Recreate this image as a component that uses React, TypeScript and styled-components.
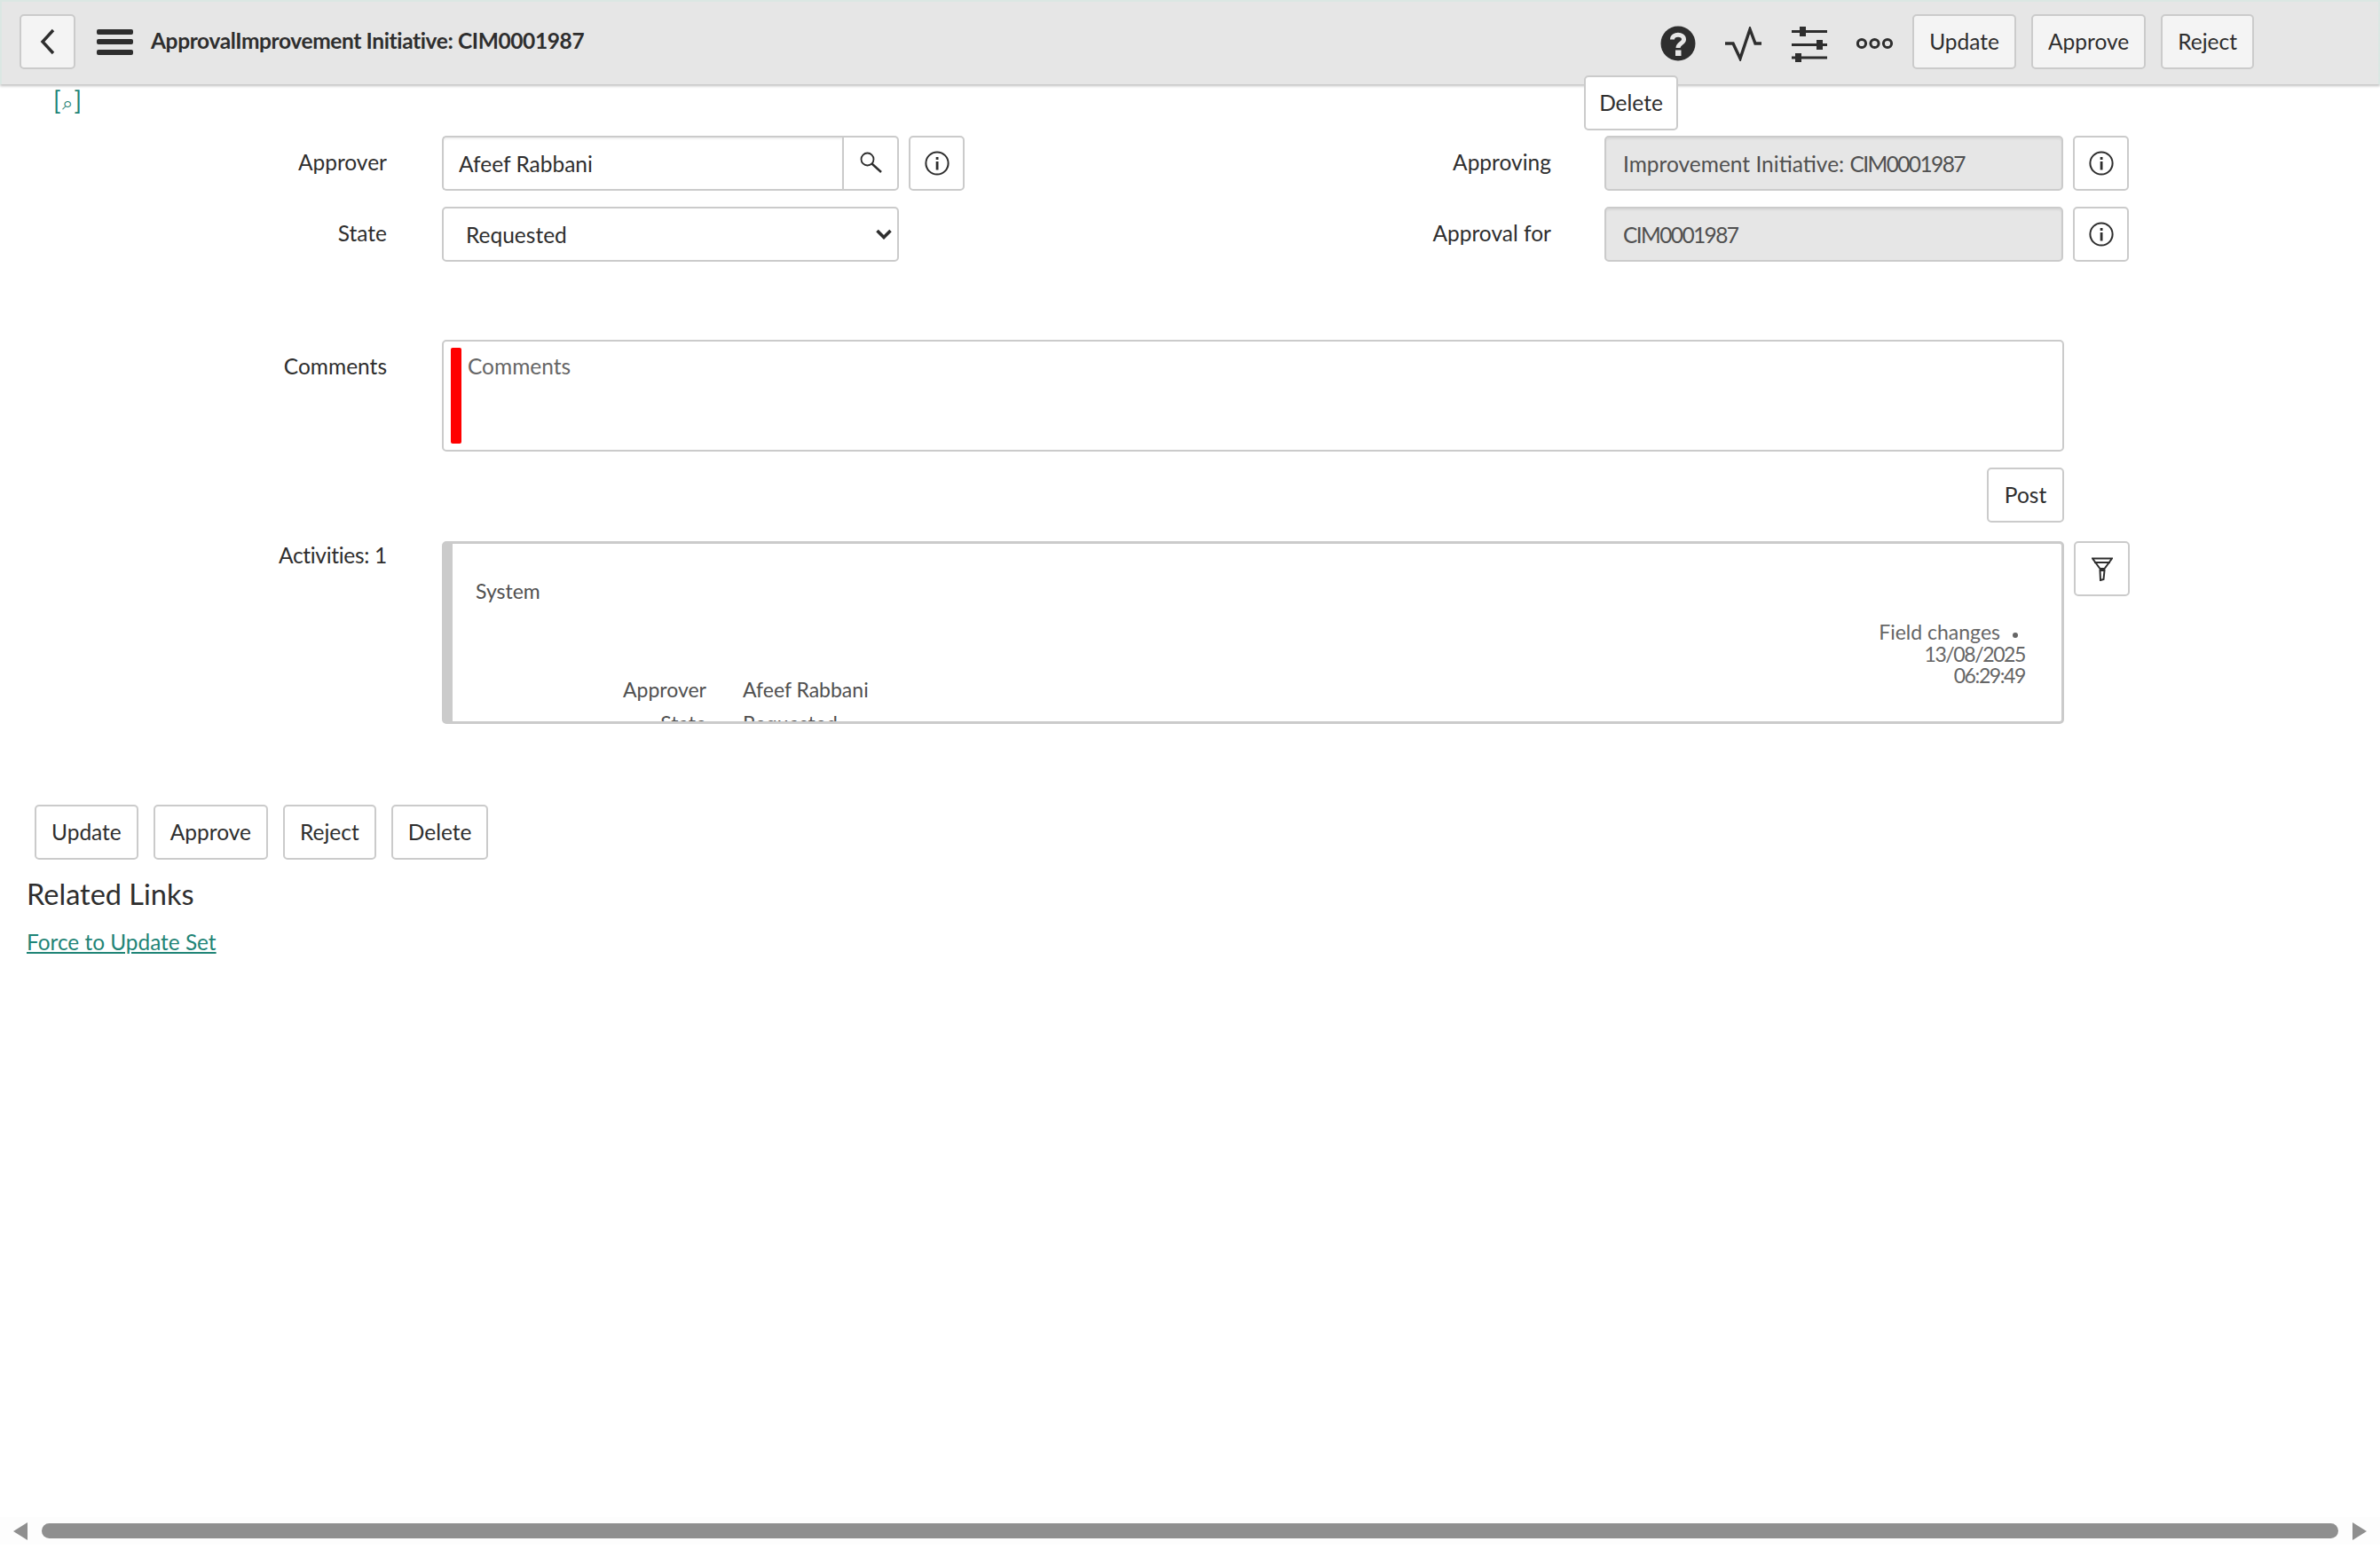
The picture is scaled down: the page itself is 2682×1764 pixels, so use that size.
import React from "react";
import styled, { createGlobalStyle } from "styled-components";

const GlobalStyle = createGlobalStyle`
  html, body {
    margin: 0;
    padding: 0;
    background: #ffffff;
  }
  * {
    box-sizing: border-box;
  }
`;

const FONT = `"Lato", "Noto Sans", sans-serif`;
const TEXT = "#2e2e2e";
const LINE = "#cbcbcb";

const App: React.FC = () => {
  return (
    <Page>
      <GlobalStyle />
      <Header>
        <BackButton aria-label="Back">
          <svg width="20" height="30" viewBox="0 0 20 30" fill="none">
            <path d="M16 2 L4 15 L16 28" stroke={TEXT} strokeWidth="3.4" />
          </svg>
        </BackButton>
        <Hamburger>
          <HamburgerBar />
          <HamburgerBar />
          <HamburgerBar />
        </Hamburger>
        <Title>ApprovalImprovement Initiative: CIM0001987</Title>
        <HeaderRight>
          <HeaderIcon>
            <svg width="40" height="40" viewBox="0 0 40 40">
              <circle cx="20" cy="20" r="19.5" fill={TEXT} />
              <path
                d="M13.5 15.5 C13.5 8.5 26.5 8.5 26.5 15.5 C26.5 20 20 19.5 20 25"
                fill="none"
                stroke="#e6e6e6"
                strokeWidth="5"
              />
              <rect x="17" y="27.5" width="6.5" height="6.5" fill="#e6e6e6" />
            </svg>
          </HeaderIcon>
          <HeaderIcon>
            <svg width="42" height="39" viewBox="0 0 42 39" fill="none">
              <polyline
                points="0,19 9,19 17,36 28,3 34,19 41,19"
                stroke={TEXT}
                strokeWidth="3.4"
              />
            </svg>
          </HeaderIcon>
          <HeaderIcon>
            <svg width="41" height="41" viewBox="0 0 41 41" fill={TEXT}>
              <rect x="0" y="5" width="40" height="3" />
              <rect x="0" y="20" width="40" height="3" />
              <rect x="0" y="34.5" width="40" height="3" />
              <rect x="9" y="1" width="7" height="11" />
              <rect x="28" y="16" width="7" height="11" />
              <rect x="4" y="31" width="7" height="10" />
            </svg>
          </HeaderIcon>
          <HeaderIcon>
            <svg width="42" height="16" viewBox="0 0 42 16" fill="none">
              <circle cx="6" cy="8" r="4.6" stroke={TEXT} strokeWidth="3" />
              <circle cx="20.5" cy="8" r="4.6" stroke={TEXT} strokeWidth="3" />
              <circle cx="35" cy="8" r="4.6" stroke={TEXT} strokeWidth="3" />
            </svg>
          </HeaderIcon>
          <HeaderButton>Update</HeaderButton>
          <HeaderButton>Approve</HeaderButton>
          <HeaderButton>Reject</HeaderButton>
        </HeaderRight>
        <DeleteMenu>Delete</DeleteMenu>
      </Header>

      <Reference>
        [<RefGlyph>⌕</RefGlyph>]
      </Reference>

      <FormGrid>
        <FieldRow>
          <Label>Approver</Label>
          <Control>
            <TextInput defaultValue="Afeef Rabbani" />
            <SearchButton aria-label="Search">
              <svg width="25" height="24" viewBox="0 0 25 24" fill="none">
                <circle cx="8.5" cy="8.5" r="7" stroke={TEXT} strokeWidth="1.8" />
                <path d="M13.5 13.5 L24 23" stroke={TEXT} strokeWidth="2.4" />
              </svg>
            </SearchButton>
            <InfoButton />
          </Control>
          <Label>Approving</Label>
          <Control>
            <ReadOnly>
              Improvement Initiative: <Code>CIM0001987</Code>
            </ReadOnly>
            <InfoButton />
          </Control>
        </FieldRow>
        <FieldRow>
          <Label>State</Label>
          <Control>
            <SelectWrap>
              <StateSelect defaultValue="Requested">
                <option>Requested</option>
                <option>Approved</option>
                <option>Rejected</option>
              </StateSelect>
              <SelectChevron width="18" height="12" viewBox="0 0 18 12" fill="none">
                <path d="M1.5 2 L9 9.5 L16.5 2" stroke={TEXT} strokeWidth="3.6" />
              </SelectChevron>
            </SelectWrap>
          </Control>
          <Label>Approval for</Label>
          <Control>
            <ReadOnly>
              <Code>CIM0001987</Code>
            </ReadOnly>
            <InfoButton />
          </Control>
        </FieldRow>
      </FormGrid>

      <CommentsRow>
        <Label>Comments</Label>
        <CommentsBox>
          <MandatoryBar />
          <CommentsInput placeholder="Comments" />
        </CommentsBox>
      </CommentsRow>

      <PostRow>
        <PostButton>Post</PostButton>
      </PostRow>

      <ActivitiesRow>
        <ActivitiesLabel>Activities: 1</ActivitiesLabel>
        <ActivityBox>
          <ActivityAuthor>System</ActivityAuthor>
          <ActivityMeta>
            <MetaLine>
              Field changes<MetaDot />
            </MetaLine>
            <MetaDate>13/08/2025</MetaDate>
            <MetaDate>06:29:49</MetaDate>
          </ActivityMeta>
          <ChangeRow>
            <ChangeName>Approver</ChangeName>
            <span>Afeef Rabbani</span>
          </ChangeRow>
          <ChangeRow>
            <ChangeName>State</ChangeName>
            <span>Requested</span>
          </ChangeRow>
        </ActivityBox>
        <FilterButton aria-label="Filter">
          <svg width="24" height="27" viewBox="0 0 24 27" fill="none">
            <path
              d="M1 1.5 H23 L14.5 13 H9.5 Z M3 6 H21"
              stroke={TEXT}
              strokeWidth="2"
            />
            <path d="M9.5 15 H14.5 L13.5 25 L10 26 Z" stroke={TEXT} strokeWidth="2" />
          </svg>
        </FilterButton>
      </ActivitiesRow>

      <BottomButtons>
        <PlainButton>Update</PlainButton>
        <PlainButton>Approve</PlainButton>
        <PlainButton>Reject</PlainButton>
        <PlainButton>Delete</PlainButton>
      </BottomButtons>

      <RelatedHeading>Related Links</RelatedHeading>
      <RelatedLink href="#">Force to Update Set</RelatedLink>

      <ScrollBar>
        <ScrollArrow $dir="left" />
        <ScrollThumb />
        <ScrollArrow $dir="right" />
      </ScrollBar>
    </Page>
  );
};

const InfoButton: React.FC = () => (
  <IconBox aria-label="Info">
    <svg width="28" height="28" viewBox="0 0 28 28" fill="none">
      <circle cx="14" cy="14" r="12.6" stroke={TEXT} strokeWidth="2" />
      <rect x="12.7" y="12" width="2.8" height="9.5" fill={TEXT} />
      <rect x="12.7" y="7" width="2.8" height="3" fill={TEXT} />
    </svg>
  </IconBox>
);

const Page = styled.div`
  position: relative;
  display: flex;
  flex-direction: column;
  width: 2682px;
  height: 1764px;
  overflow: hidden;
  font-family: ${FONT};
  font-size: 24.5px;
  color: ${TEXT};
`;

const Header = styled.header`
  position: relative;
  display: flex;
  align-items: center;
  flex: none;
  height: 95px;
  padding: 0 140px 3px 20px;
  background: #e6e6e6;
  border-top: 2px solid #dbe7e3;
  border-left: 2px solid #dbe7e3;
  border-right: 2px solid #dbe7e3;
  box-shadow: 0 2px 3px rgba(0, 0, 0, 0.25);
`;

const BackButton = styled.button`
  display: flex;
  align-items: center;
  justify-content: center;
  width: 63px;
  height: 62px;
  padding: 0;
  background: #f4f4f4;
  border: 2px solid ${LINE};
  border-radius: 5px;
`;

const Hamburger = styled.div`
  display: flex;
  flex-direction: column;
  gap: 5.5px;
  width: 41px;
  margin-left: 24px;
`;

const HamburgerBar = styled.span`
  height: 6px;
  background: ${TEXT};
  border-radius: 2px;
`;

const Title = styled.h1`
  margin: 0 0 4px 20px;
  font-size: 24.5px;
  font-weight: 700;
  letter-spacing: -0.38px;
  white-space: nowrap;
`;

const HeaderRight = styled.div`
  display: flex;
  align-items: center;
  gap: 17px;
  margin-left: auto;
`;

const HeaderIcon = styled.span`
  display: flex;
  align-items: center;
  justify-content: center;
  width: 42px;
  margin: 4px 15px 0 0;

  &:nth-child(4) {
    margin-right: 4px;
  }
`;

const ButtonBase = styled.button`
  height: 62px;
  padding: 0 17px 2px;
  font-family: inherit;
  font-size: 24.5px;
  color: ${TEXT};
  background: #ffffff;
  border: 2px solid ${LINE};
  border-radius: 5px;
  white-space: nowrap;
`;

const HeaderButton = styled(ButtonBase)`
  background: #f4f4f4;
`;

const PlainButton = styled(ButtonBase)``;

const PostButton = styled(ButtonBase)`
  width: 87px;
`;

const DeleteMenu = styled(ButtonBase)`
  position: absolute;
  top: 83px;
  right: 789px;
  width: 106px;
  padding: 0 0 2px;
  z-index: 2;
`;

const Reference = styled.div`
  flex: none;
  height: 58px;
  padding: 2px 0 0 60px;
  font-size: 28px;
  line-height: 32px;
  letter-spacing: 1.5px;
  color: #1f8476;
`;

const RefGlyph = styled.span`
  font-family: "DejaVu Sans", sans-serif;
  font-size: 22px;
`;

const FormGrid = styled.div`
  display: flex;
  flex-direction: column;
  gap: 18px;
`;

const FieldRow = styled.div`
  display: grid;
  grid-template-columns: 436px 651px 661px 651px;
  height: 62px;
`;

const Label = styled.label`
  padding-top: 14px;
  line-height: 32px;
  text-align: right;
  white-space: nowrap;
`;

const ActivitiesLabel = styled(Label)`
  padding-top: 0;
  letter-spacing: -0.3px;
`;

const Control = styled.div`
  display: flex;
  padding-left: 60px;

  &:nth-child(2) {
    padding-left: 62px;
  }
`;

const TextInput = styled.input`
  width: 451px;
  height: 62px;
  padding: 0 17px;
  font-family: inherit;
  font-size: 24.5px;
  color: ${TEXT};
  background: #ffffff;
  border: 2px solid ${LINE};
  border-right: none;
  border-radius: 5px 0 0 5px;
  box-shadow: inset 0 2px 2px rgba(0, 0, 0, 0.06);
`;

const SearchButton = styled.button`
  display: flex;
  align-items: center;
  justify-content: center;
  width: 64px;
  height: 62px;
  padding: 0 0 2px;
  background: #ffffff;
  border: 2px solid ${LINE};
  border-radius: 0 5px 5px 0;
`;

const IconBox = styled.button`
  display: flex;
  align-items: center;
  justify-content: center;
  flex: none;
  width: 63px;
  height: 62px;
  margin-left: 11px;
  padding: 0;
  background: #ffffff;
  border: 2px solid ${LINE};
  border-radius: 5px;
`;

const ReadOnly = styled.div`
  width: 518px;
  height: 62px;
  padding: 0 19px;
  line-height: 60px;
  color: #505050;
  background: #e6e6e6;
  border: 2px solid ${LINE};
  border-radius: 5px;
  box-shadow: inset 0 2px 2px rgba(0, 0, 0, 0.06);
`;

const Code = styled.span`
  letter-spacing: -1.6px;
`;

const SelectWrap = styled.div`
  position: relative;
  width: 515px;
  height: 62px;
`;

const StateSelect = styled.select`
  width: 100%;
  height: 100%;
  padding: 0 40px 0 25px;
  font-family: inherit;
  font-size: 24.5px;
  color: ${TEXT};
  background: #ffffff;
  border: 2px solid ${LINE};
  border-radius: 5px;
  appearance: none;
`;

const SelectChevron = styled.svg`
  position: absolute;
  top: 25px;
  right: 8px;
  pointer-events: none;
`;

const CommentsRow = styled.div`
  display: grid;
  grid-template-columns: 436px 1890px;
  height: 126px;
  margin-top: 88px;
`;

const CommentsBox = styled.div`
  position: relative;
  margin-left: 62px;
`;

const MandatoryBar = styled.span`
  position: absolute;
  top: 9px;
  bottom: 9px;
  left: 10px;
  width: 12px;
  background: #ff0000;
  border-radius: 2px;
`;

const CommentsInput = styled.textarea`
  display: block;
  width: 100%;
  height: 100%;
  padding: 12px 27px;
  font-family: inherit;
  font-size: 24.5px;
  line-height: 32px;
  resize: none;
  background: #ffffff;
  border: 2px solid ${LINE};
  border-radius: 5px;

  &::placeholder {
    color: #666666;
    opacity: 1;
  }
`;

const PostRow = styled.div`
  display: flex;
  justify-content: flex-end;
  width: 2326px;
  margin-top: 18px;
`;

const ActivitiesRow = styled.div`
  display: grid;
  grid-template-columns: 436px 1890px 74px;
  height: 206px;
  margin-top: 21px;
`;

const ActivityBox = styled.div`
  position: relative;
  margin-left: 62px;
  padding: 38px 0 0 26px;
  overflow: hidden;
  font-size: 23px;
  color: #505050;
  border: 3px solid ${LINE};
  border-left-width: 12px;
  border-radius: 5px;
`;

const ActivityAuthor = styled.div`
  line-height: 30px;
`;

const ActivityMeta = styled.div`
  margin: 19px 41px -16px 0;
  text-align: right;
  color: #666666;
`;

const MetaLine = styled.div`
  height: 24.5px;
  line-height: 24.5px;
`;

const MetaDate = styled(MetaLine)`
  letter-spacing: -1.4px;
`;

const MetaDot = styled.span`
  display: inline-block;
  width: 6px;
  height: 6px;
  margin: 0 8px 2px 14px;
  background: #666666;
  border-radius: 50%;
`;

const ChangeRow = styled.div`
  display: grid;
  grid-template-columns: 260px auto;
  column-gap: 41px;
  line-height: 38px;
`;

const ChangeName = styled.span`
  text-align: right;
`;

const FilterButton = styled(IconBox)`
  align-self: start;
  margin-left: 11px;
`;

const BottomButtons = styled.div`
  display: flex;
  gap: 17px;
  margin: 91px 0 0 39px;
`;

const RelatedHeading = styled.h2`
  margin: 17px 0 0 30px;
  font-size: 32.5px;
  font-weight: 400;
  line-height: 44px;
`;

const RelatedLink = styled.a`
  align-self: flex-start;
  margin: 16px 0 0 30px;
  font-size: 24.4px;
  line-height: 32px;
  color: #1f8476;
`;

const ScrollBar = styled.div`
  display: flex;
  align-items: center;
  height: 31px;
  margin-top: auto;
  margin-bottom: 23px;
  padding: 0 15px;
  background: #fdfdfd;
`;

const ScrollArrow = styled.span<{ $dir: "left" | "right" }>`
  flex: none;
  width: 0;
  height: 0;
  border-top: 10px solid transparent;
  border-bottom: 10px solid transparent;
  ${(p) =>
    p.$dir === "left"
      ? `border-right: 16px solid #8f8f8f;`
      : `border-left: 16px solid #8f8f8f;`}
`;

const ScrollThumb = styled.span`
  flex: 1;
  height: 17px;
  margin: 0 16px;
  background: #8f8f8f;
  border-radius: 9px;
`;

export default App;
